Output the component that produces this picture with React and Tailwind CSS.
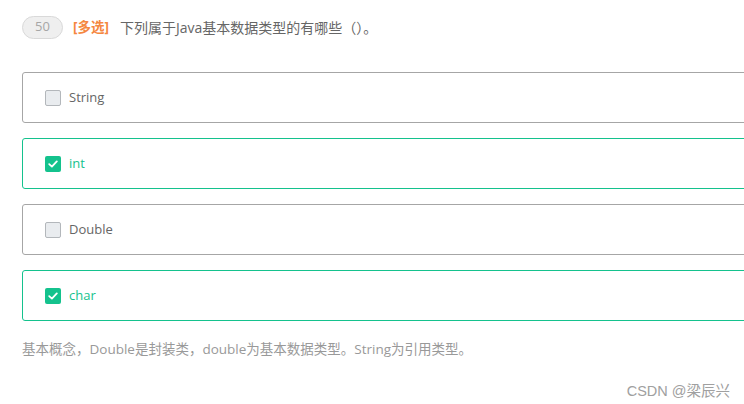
const OPTIONS = [
  { label: 'String', checked: false },
  { label: 'int', checked: true },
  { label: 'Double', checked: false },
  { label: 'char', checked: true },
]

function CheckBox({ checked }) {
  if (checked) {
    return (
      <span className="flex h-4 w-4 shrink-0 items-center justify-center rounded-[2px] bg-[#14c28d]">
        <svg width="10" height="8" viewBox="0 0 10 8" fill="none">
          <path d="M1.2 4.1 L3.9 6.6 L8.8 1.4" stroke="#fff" strokeWidth="1.8" strokeLinecap="round" strokeLinejoin="round" />
        </svg>
      </span>
    )
  }
  return <span className="h-4 w-4 shrink-0 rounded-[2px] border border-[#b3b7bb] bg-[#e9ecef]" />
}

export default function App() {
  return (
    <div
      className="flex h-[404px] w-[744px] flex-col overflow-hidden bg-white pl-[22px] pt-[15px]"
      style={{ fontFamily: '"Open Sans", "Noto Sans CJK SC", sans-serif' }}
    >
      <div className="flex h-[24px] items-center">
        <span className="flex h-[23px] w-[41px] items-center justify-center rounded-full border border-[#d9d9d9] bg-[#efefef] text-[13px] text-[#a6a6a6]">
          50
        </span>
        <span className="ml-[10px] text-[13.5px] font-bold text-[#f5873f]">[多选]</span>
        <span className="ml-[11px] text-[14px] text-[#666]">下列属于Java基本数据类型的有哪些（）。</span>
      </div>

      <div className="mt-[33px] flex flex-col gap-[15px]">
        {OPTIONS.map((option) => (
          <div
            key={option.label}
            className={`flex h-[51px] w-[740px] items-center rounded-[3px] border pl-[22px] ${
              option.checked ? 'border-[#14c28d]' : 'border-[#a6a6a6]'
            }`}
          >
            <CheckBox checked={option.checked} />
            <span className={`ml-[8px] text-[13px] ${option.checked ? 'text-[#14c28d]' : 'text-[#666]'}`}>
              {option.label}
            </span>
          </div>
        ))}
      </div>

      <p className="mt-[18px] text-[13.5px] text-[#999]">
        基本概念，Double是封装类，double为基本数据类型。String为引用类型。
      </p>

      <div className="mt-[22px] flex justify-end pr-[14px]">
        <span className="text-[14.5px] text-[#a0a0a0]" style={{ fontFamily: '"Liberation Sans", "Noto Sans CJK SC", sans-serif' }}>
          CSDN @梁辰兴
        </span>
      </div>
    </div>
  )
}
